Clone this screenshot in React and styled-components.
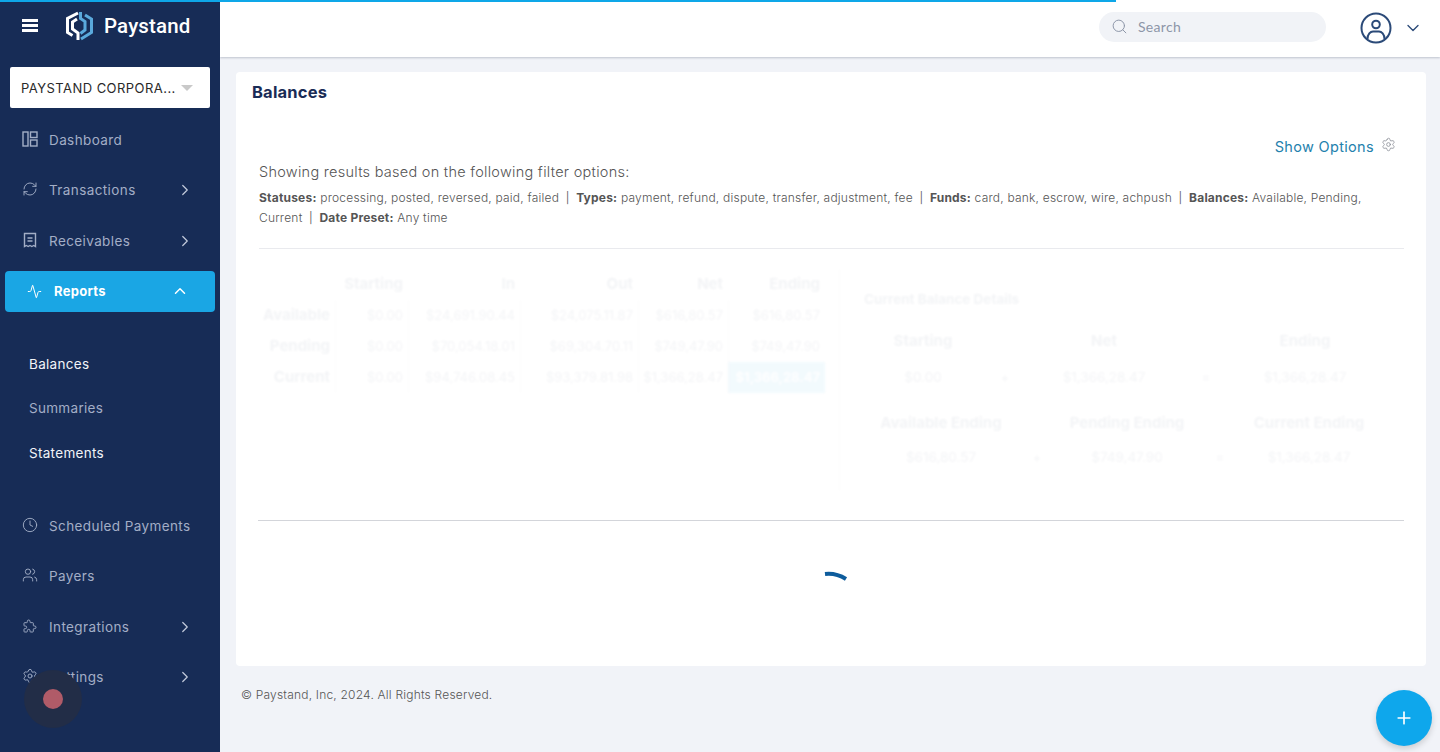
import React from 'react';
import styled, { createGlobalStyle } from 'styled-components';
import {
    Activity,
    ChevronDown,
    ChevronRight,
    ChevronUp,
    Clock,
    Plus,
    RefreshCw,
    Search,
    Settings,
    Users,
} from 'lucide-react';

const FONT = '"Inter", "Liberation Sans", sans-serif';

const GlobalStyle = createGlobalStyle`
    html, body {
        margin: 0;
        height: 100%;
        overflow: hidden;
        background: #f1f3f8;
        font-family: ${FONT};
    }
    * { box-sizing: border-box; }
`;

const Page = styled.div`
    display: flex;
    width: 1440px;
    height: 752px;
    position: relative;
    overflow: hidden;
`;

const ProgressBar = styled.div`
    position: absolute;
    top: 0;
    left: 0;
    width: 1116px;
    height: 2px;
    background: #0ea7e8;
    z-index: 5;
`;

const Sidebar = styled.aside`
    width: 220px;
    flex: none;
    background: #172c56;
    position: relative;
`;

const LogoRow = styled.div`
    height: 57px;
    display: flex;
    align-items: center;
    padding: 0 0 6px 22px;
`;

const Burger = styled.div`
    width: 16px;
    height: 13px;
    margin-right: 27px;
    border-top: 3px solid #fff;
    border-bottom: 3px solid #fff;
    position: relative;
    &::after {
        content: '';
        position: absolute;
        left: 0;
        right: 0;
        top: 2px;
        height: 3px;
        background: #fff;
    }
`;

const LogoText = styled.span`
    font-family: Roboto, sans-serif;
    font-weight: 500;
    font-size: 20.5px;
    letter-spacing: 0.15px;
    color: #fff;
    margin-left: 10px;
`;

const OrgSelect = styled.div`
    margin: 10px 10px 6.4px;
    height: 41px;
    background: #fff;
    border-radius: 2px;
    display: flex;
    align-items: center;
    padding: 0 17px 0 11px;
    justify-content: space-between;
    font-size: 13px;
    font-weight: 400;
    letter-spacing: 0.45px;
    color: #2a2a2a;
    &::after {
        content: '';
        border-left: 6px solid transparent;
        border-right: 6px solid transparent;
        border-top: 6px solid #c9c9c9;
    }
`;

const NavItem = styled.div`
    height: 50.5px;
    display: flex;
    align-items: center;
    padding: 0 26px 0 22px;
    font-size: 13.5px;
    letter-spacing: 0.4px;
    color: #a3aec6;
    svg.lead {
        width: 16px;
        height: 16px;
        margin-right: 11px;
        flex: none;
        stroke-width: 1.4;
        position: relative;
        top: -1px;
    }
    svg.arrow {
        margin-left: auto;
        width: 18px;
        height: 18px;
        stroke-width: 1.6;
        color: #c3cbdc;
    }
`;

const ActiveItem = styled.div`
    height: 41px;
    margin: 5px 5px 0;
    background: #1aa6e4;
    border-radius: 4px;
    display: flex;
    align-items: center;
    padding: 0 26px 0 22px;
    font-size: 13px;
    font-weight: 700;
    letter-spacing: 0.3px;
    color: #fff;
    svg.lead {
        width: 15px;
        height: 15px;
        margin-right: 12px;
        stroke-width: 1.6;
    }
    svg.arrow {
        margin-left: auto;
        width: 18px;
        height: 18px;
    }
`;

const SubList = styled.div`
    padding: 29.6px 0 25.6px 29px;
    display: flex;
    flex-direction: column;
`;

const SubItem = styled.div`
    height: 44.5px;
    display: flex;
    align-items: center;
    font-size: 13.5px;
    letter-spacing: 0.3px;
    color: ${p => (p.$dim ? '#a3aec6' : '#f2f4f8')};
`;

const RecordBlob = styled.div`
    position: absolute;
    left: 24px;
    top: 670px;
    width: 58px;
    height: 58px;
    border-radius: 50%;
    background: #222d47;
    display: flex;
    align-items: center;
    justify-content: center;
    &::after {
        content: '';
        width: 20px;
        height: 20px;
        border-radius: 50%;
        background: #b05b68;
    }
`;

const Content = styled.div`
    flex: 1;
    min-width: 0;
    display: flex;
    flex-direction: column;
`;

const TopBar = styled.header`
    height: 57px;
    flex: none;
    background: #fff;
    box-shadow: 0 1px 2px rgba(40, 50, 80, 0.25);
    display: flex;
    align-items: center;
    justify-content: flex-end;
    padding: 0 17px 2px 0;
`;

const SearchBox = styled.div`
    width: 227px;
    height: 30px;
    margin: -2px 34px 0 0;
    border-radius: 15px;
    background: #f1f3f7;
    display: flex;
    align-items: center;
    padding: 0 12px;
    font-family: Lato, sans-serif;
    font-size: 14px;
    letter-spacing: 0.3px;
    color: #8d96a8;
    svg {
        width: 17px;
        height: 17px;
        margin-right: 10px;
        stroke-width: 1.4;
    }
`;

const UserMenu = styled.div`
    display: flex;
    align-items: center;
    gap: 11px;
    color: #2b4a78;
`;

const Main = styled.main`
    padding: 15px 14px 0 16px;
`;

const Card = styled.section`
    height: 594px;
    background: #fff;
    border-radius: 4px;
    padding: 10px 22px 0 16px;
`;

const Title = styled.h1`
    margin: 0;
    font-size: 16.5px;
    line-height: 20px;
    font-weight: 700;
    letter-spacing: 0.2px;
    color: #1a2c56;
`;

const OptionsRow = styled.div`
    display: flex;
    justify-content: flex-end;
    align-items: center;
    margin: 33px 8px 0 0;
    height: 22px;
    font-size: 14.5px;
    letter-spacing: 0.33px;
    color: #2481ad;
    svg {
        width: 15px;
        height: 15px;
        margin: -3px 0 0 7px;
        color: #8b8f98;
        stroke-width: 1.3;
    }
`;

const FilterBlock = styled.div`
    padding: 4px 0 0 7px;
`;

const FilterHeading = styled.div`
    font-size: 14.5px;
    font-weight: 300;
    letter-spacing: 0.27px;
    line-height: 22px;
    color: #555;
`;

const FilterText = styled.p`
    margin: 5px 0 0;
    font-size: 12px;
    letter-spacing: 0.21px;
    line-height: 20px;
    font-weight: 300;
    color: #555;
    b {
        font-weight: 700;
    }
`;

const Sep = styled.span`
    margin: 0 3px;
    font-weight: 400;
    font-size: 11px;
    color: #666;
`;

const Rule = styled.hr`
    border: 0;
    border-top: 1px solid ${p => p.$color || '#e9eaee'};
    margin: ${p => p.$margin};
`;

const FadedArea = styled.div`
    height: 250px;
    display: flex;
    padding-left: 7px;
    opacity: 0.05;
    filter: blur(0.9px);
    color: #1a2c56;
`;

const BalanceGrid = styled.div`
    width: 574px;
    margin-top: 20px;
    flex: none;
    display: grid;
    grid-template-columns: 76px 73px 112px 118px 90px 97px;
    grid-auto-rows: 31px;
    align-items: center;
`;

const GridCell = styled.div`
    height: 100%;
    display: flex;
    align-items: center;
    justify-content: flex-end;
    padding: 0 5px 2px 0;
    white-space: nowrap;
    font-weight: ${p => (p.$value && !p.$hot ? 400 : 700)};
    font-size: ${p => (p.$value ? 13 : 15)}px;
    border-left: ${p => (p.$value ? '1px solid rgba(26, 44, 86, 0.4)' : '0')};
    background: ${p => (p.$hot ? '#16a5e6' : 'none')};
    color: ${p => (p.$hot ? '#fff' : 'inherit')};
`;

const DetailPanel = styled.div`
    flex: 1;
    margin: 20px 0 0 6px;
    height: 222px;
    border-left: 1px solid rgba(26, 44, 86, 0.4);
    padding: 20px 0 0 24px;
    font-size: 13.5px;
`;

const DetailTitle = styled.div`
    font-weight: 700;
    line-height: 20px;
    margin-bottom: 16px;
`;

const DetailRow = styled.div`
    display: grid;
    grid-template-columns: ${p => p.$columns};
    justify-items: center;
    align-items: center;
    height: ${p => p.$height}px;
    font-size: ${p => (p.$head ? 15 : 13.5)}px;
    font-weight: ${p => (p.$head ? 700 : 400)};
`;

const SpinnerArea = styled.div`
    display: flex;
    justify-content: center;
    padding: 50px 0 0 16px;
`;

const Footer = styled.footer`
    padding: 21px 0 0 5px;
    font-size: 12px;
    letter-spacing: 0.2px;
    font-weight: 300;
    color: #555;
`;

const Fab = styled.button`
    position: absolute;
    right: 8px;
    bottom: 6px;
    width: 56px;
    height: 56px;
    border: 0;
    border-radius: 50%;
    background: #0ea7ec;
    color: #fff;
    display: flex;
    align-items: center;
    justify-content: center;
    box-shadow: 0 3px 6px rgba(0, 0, 0, 0.16);
    svg {
        width: 20px;
        height: 20px;
    }
`;

const Logo = () => (
    <svg width="29" height="30" viewBox="0 0 29 30" fill="none">
        <path d="M13 2 2.500 7.500v14l5 3" stroke="#fff" strokeWidth="3" />
        <path d="M12 8 7.500 11v7l5.500 4v7" stroke="#fff" strokeWidth="3" />
        <path d="M15.500 1v6.500l4.500 3v8.500l-4.500 3.500" stroke="#5aa9dc" strokeWidth="3" />
        <path d="M20 4l6.500 4v13.500L16 28" stroke="#5aa9dc" strokeWidth="3" />
    </svg>
);

const DashboardIcon = () => (
    <svg className="lead" viewBox="0 0 16 16" fill="none" stroke="currentColor">
        <rect x="1" y="1" width="5" height="14" />
        <rect x="8.500" y="1" width="6.500" height="5.500" />
        <rect x="8.500" y="9" width="6.500" height="6" />
    </svg>
);

const ReceiptIcon = () => (
    <svg className="lead" viewBox="0 0 16 16" fill="none" stroke="currentColor">
        <path d="M2.500 1.500h11v13l-1.800-1-1.900 1-1.800-1-1.800 1-1.900-1-1.800 1z" />
        <path d="M5.500 6h5M5.500 9h5" />
    </svg>
);

const PuzzleIcon = () => (
    <svg className="lead" viewBox="0 0 24 24" fill="none" stroke="currentColor" strokeWidth="1.7" strokeLinejoin="round">
        <path d="M4 7h3a1 1 0 0 0 1-1V5a2 2 0 0 1 4 0v1a1 1 0 0 0 1 1h3a1 1 0 0 1 1 1v3a1 1 0 0 0 1 1h1a2 2 0 0 1 0 4h-1a1 1 0 0 0-1 1v3a1 1 0 0 1-1 1h-3a1 1 0 0 1-1-1v-1a2 2 0 0 0-4 0v1a1 1 0 0 1-1 1H4a1 1 0 0 1-1-1v-3a1 1 0 0 1 1-1h1a2 2 0 0 0 0-4H4a1 1 0 0 1-1-1V8a1 1 0 0 1 1-1" />
    </svg>
);

const UserIcon = () => (
    <svg width="32" height="32" viewBox="0 0 32 32" fill="none" stroke="currentColor" strokeWidth="2">
        <circle cx="16" cy="16" r="14.500" />
        <circle cx="16" cy="12.500" r="3.800" />
        <path d="M7.500 27c0-5 3-7.500 5.500-7.500h6c2.500 0 5.500 2.500 5.500 7.500" />
    </svg>
);

const Spinner = () => (
    <svg width="26" height="11" viewBox="0 0 26 11" fill="none">
        <path d="M2 3c7-.8 14 .6 21 5" stroke="#0d5c9c" strokeWidth="4" />
    </svg>
);

const navTop = [
    { label: 'Dashboard', icon: <DashboardIcon /> },
    { label: 'Transactions', icon: <RefreshCw className="lead" />, arrow: true },
    { label: 'Receivables', icon: <ReceiptIcon />, arrow: true },
];

const navBottom = [
    { label: 'Scheduled Payments', icon: <Clock className="lead" /> },
    { label: 'Payers', icon: <Users className="lead" /> },
    { label: 'Integrations', icon: <PuzzleIcon />, arrow: true },
    { label: 'Settings', icon: <Settings className="lead" />, arrow: true },
];

const balanceRows = [
    ['Available', '$0.00', '$24,691.90.44', '$24,075.11.87', '$616,80.57', '$616,80.57'],
    ['Pending', '$0.00', '$70,054.18.01', '$69,304.70.11', '$749,47.90', '$749,47.90'],
    ['Current', '$0.00', '$94,746.08.45', '$93,379.81.98', '$1,366,28.47', '$1,366,28.47'],
];

const TOP_COLUMNS = '118px 46px 152px 52px 146px';
const LOWER_COLUMNS = '154px 38px 142px 44px 134px';

const NavRow = ({ label, icon, arrow }) => (
    <NavItem>
        {icon}
        {label}
        {arrow && <ChevronRight className="arrow" />}
    </NavItem>
);

const App = () => (
    <Page>
        <GlobalStyle />
        <ProgressBar />
        <Sidebar>
            <LogoRow>
                <Burger />
                <Logo />
                <LogoText>Paystand</LogoText>
            </LogoRow>
            <OrgSelect>PAYSTAND CORPORA...</OrgSelect>
            {navTop.map(item => (
                <NavRow key={item.label} {...item} />
            ))}
            <ActiveItem>
                <Activity className="lead" />
                Reports
                <ChevronUp className="arrow" />
            </ActiveItem>
            <SubList>
                <SubItem>Balances</SubItem>
                <SubItem $dim>Summaries</SubItem>
                <SubItem>Statements</SubItem>
            </SubList>
            {navBottom.map(item => (
                <NavRow key={item.label} {...item} />
            ))}
            <RecordBlob />
        </Sidebar>
        <Content>
            <TopBar>
                <SearchBox>
                    <Search />
                    Search
                </SearchBox>
                <UserMenu>
                    <UserIcon />
                    <ChevronDown size={20} strokeWidth={1.6} />
                </UserMenu>
            </TopBar>
            <Main>
                <Card>
                    <Title>Balances</Title>
                    <OptionsRow>
                        Show Options
                        <Settings />
                    </OptionsRow>
                    <FilterBlock>
                        <FilterHeading>Showing results based on the following filter options:</FilterHeading>
                        <FilterText>
                            <b>Statuses:</b> processing, posted, reversed, paid, failed <Sep>|</Sep> <b>Types:</b>{' '}
                            payment, refund, dispute, transfer, adjustment, fee <Sep>|</Sep> <b>Funds:</b> card, bank,
                            escrow, wire, achpush <Sep>|</Sep> <b>Balances:</b> Available, Pending, Current{' '}
                            <Sep>|</Sep> <b>Date Preset:</b> Any time
                        </FilterText>
                    </FilterBlock>
                    <Rule $margin="20px 0 0 7px" />
                    <FadedArea>
                        <BalanceGrid>
                            {['', 'Starting', 'In', 'Out', 'Net', 'Ending'].map((h, i) => (
                                <GridCell key={`head-${i}`}>{h}</GridCell>
                            ))}
                            {balanceRows.map(row =>
                                row.map((cell, i) => (
                                    <GridCell
                                        key={`${row[0]}-${i}`}
                                        $value={i > 0}
                                        $hot={row[0] === 'Current' && i === 5}
                                    >
                                        {cell}
                                    </GridCell>
                                )),
                            )}
                        </BalanceGrid>
                        <DetailPanel>
                            <DetailTitle>Current Balance Details</DetailTitle>
                            <DetailRow $head $height={30} $columns={TOP_COLUMNS}>
                                <span>Starting</span>
                                <span />
                                <span>Net</span>
                                <span />
                                <span>Ending</span>
                            </DetailRow>
                            <DetailRow $height={44} $columns={TOP_COLUMNS}>
                                <span>$0.00</span>
                                <span>+</span>
                                <span>$1,366,28.47</span>
                                <span>=</span>
                                <span>$1,366,28.47</span>
                            </DetailRow>
                            <DetailRow $head $height={46} $columns={LOWER_COLUMNS}>
                                <span>Available Ending</span>
                                <span />
                                <span>Pending Ending</span>
                                <span />
                                <span>Current Ending</span>
                            </DetailRow>
                            <DetailRow $height={24} $columns={LOWER_COLUMNS}>
                                <span>$616,80.57</span>
                                <span>+</span>
                                <span>$749,47.90</span>
                                <span>=</span>
                                <span>$1,366,28.47</span>
                            </DetailRow>
                        </DetailPanel>
                    </FadedArea>
                    <Rule $color="#d3d5da" $margin="21px 0 0 6px" />
                    <SpinnerArea>
                        <Spinner />
                    </SpinnerArea>
                </Card>
                <Footer>© Paystand, Inc, 2024. All Rights Reserved.</Footer>
            </Main>
            <Fab aria-label="Add">
                <Plus />
            </Fab>
        </Content>
    </Page>
);

export default App;
